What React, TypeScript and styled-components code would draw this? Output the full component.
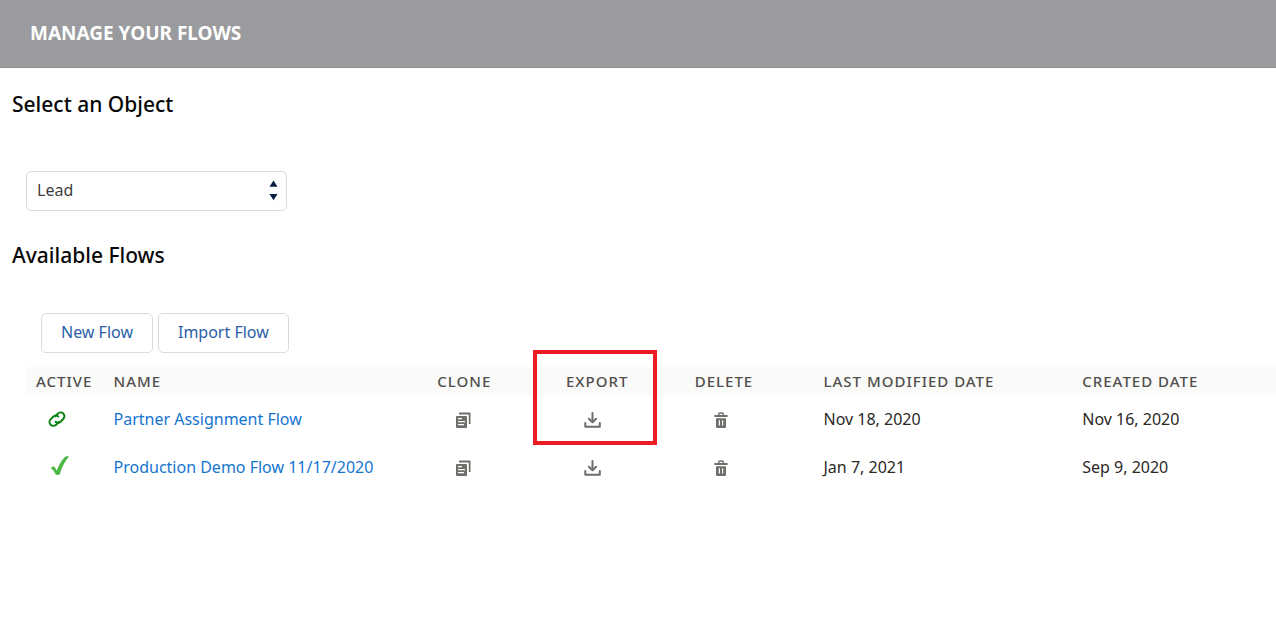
import React from "react";
import styled, { createGlobalStyle } from "styled-components";

const GlobalStyle = createGlobalStyle`
  * { box-sizing: border-box; }
  body {
    margin: 0;
    background: #fff;
    color: #2b2826;
    font-family: "Noto Sans", "Open Sans", sans-serif;
    font-size: 16px;
    line-height: 24px;
    overflow-x: hidden;
  }
`;

const Banner = styled.header`
  padding: 18px 30px 19px;
  background: #9a9b9e;
  border-bottom: 1px solid #8f9092;
`;

const Title = styled.h1`
  margin: 0;
  color: #fff;
  font-size: 19px;
  font-weight: 700;
  line-height: 30px;
  text-transform: uppercase;
`;

const Section = styled.section`
  padding-top: 20px;
`;

const Heading = styled.h2`
  margin: 0;
  padding-left: 12px;
  color: #080707;
  font-size: 21px;
  font-weight: 500;
  line-height: 32px;
`;

const SelectWrap = styled.div`
  position: relative;
  width: 261px;
  margin: 51px 0 8px 26px;
`;

const ObjectSelect = styled.select`
  display: block;
  width: 100%;
  height: 40px;
  padding: 0 32px 2px 10px;
  appearance: none;
  border: 1px solid #dddbda;
  border-radius: 5px;
  background: #fff;
  color: #3e3e3c;
  font: inherit;
`;

const SelectArrows = styled.svg`
  position: absolute;
  top: 9px;
  right: 9px;
  pointer-events: none;
`;

const Toolbar = styled.div`
  display: flex;
  gap: 5px;
  margin: 42px 0 14px 41px;
`;

const ToolButton = styled.button`
  height: 40px;
  padding: 0 19px 2px;
  border: 1px solid #dddbda;
  border-radius: 5px;
  background: #fff;
  color: #2a5ea6;
  font: inherit;
  cursor: pointer;
`;

const TableArea = styled.div`
  padding-left: 26px;
`;

const FlowTable = styled.table`
  width: 100%;
  table-layout: fixed;
  border-collapse: collapse;
`;

const Column = styled.col<{ $share: number }>`
  width: ${(p) => p.$share}%;
`;

const HeadCell = styled.th`
  position: relative;
  height: 28px;
  padding: 0 0 0 10px;
  background: #fafaf9;
  color: #514f4d;
  font-size: 15px;
  font-weight: 500;
  line-height: 28px;
  letter-spacing: 1px;
  text-align: left;
  text-transform: uppercase;
  white-space: nowrap;
`;

const Highlight = styled.span`
  position: absolute;
  z-index: 1;
  top: -17px;
  left: -23px;
  width: 124px;
  height: 95px;
  border: 4px solid #ec1c24;
  pointer-events: none;
`;

const Cell = styled.td`
  height: 48px;
  padding: 0 0 0 10px;
  white-space: nowrap;
`;

const FlowLink = styled.a`
  color: #1575cf;
  text-decoration: none;
`;

const IconCell = styled(Cell)`
  padding: 2px 0 0 27px;
`;

const StatusCell = styled(Cell)`
  padding-left: 20px;
`;

const IconButton = styled.button`
  display: block;
  padding: 0;
  border: 0;
  background: none;
  color: #706e6b;
  cursor: pointer;
`;

const Icon = styled.svg`
  display: block;
`;

const LinkIcon = () => (
  <Icon width="22" height="22" viewBox="0 0 22 22" fill="none" stroke="#0b7f10" strokeWidth="2" strokeLinecap="round" role="img" aria-label="Linked">
    <path d="M9.2 8.2l2.6-2.6a3.8 3.8 0 0 1 5.6 5.2l-2.6 2.7a3.8 3.8 0 0 1-5.2.2" />
    <path d="M12.6 14.2l-2.5 2.5a3.8 3.8 0 0 1-5.500-5.300l2.600-2.600a3.800 3.800 0 0 1 5.100-.2" />
  </Icon>
);

const CheckIcon = () => (
  <Icon width="26" height="26" viewBox="0 0 26 26" fill="#4db848" role="img" aria-label="Active">
    <path d="M5.200 13.700C6.800 12.200 8.300 12.200 9.200 13.900l1.500 2.700C12.800 11 15.600 6.300 18.600 3.200c.6-.6 1.300-.9 2.300-.9h1.300c.6 0 .8.4.3.9C18.600 7.500 15.900 13.200 14 19.400c-.5 1.900-3.900 2.100-4.700.4C8 16.900 7 15.400 5.300 14.700c-.5-.2-.5-.6-.1-1z" />
  </Icon>
);

const CloneIcon = () => (
  <Icon width="18" height="18" viewBox="0 0 18 18" aria-hidden="true">
    <path d="M5 1.500h10.500a1 1 0 0 1 1 1V13h-1.700V3.400H5z" fill="currentColor" />
    <rect x="2" y="5" width="11" height="12" rx="1" fill="currentColor" />
    <path d="M4 7.700h4M4 10.700h7M4 13.700h6" stroke="#fff" strokeWidth="1.300" />
  </Icon>
);

const ExportIcon = () => (
  <Icon width="18" height="18" viewBox="0 0 18 18" fill="none" stroke="currentColor" strokeWidth="2" strokeLinecap="round" strokeLinejoin="round" aria-hidden="true">
    <path d="M9.500 2v9M5.900 7.800l3.600 3.600L13.100 7.800M2.300 12v3.700h14.500V12" />
  </Icon>
);

const TrashIcon = () => (
  <Icon width="18" height="18" viewBox="0 0 18 18" aria-hidden="true">
    <path d="M6.800 4V3a1 1 0 0 1 1-1h2.400a1 1 0 0 1 1 1v1" fill="none" stroke="currentColor" strokeWidth="1.500" />
    <rect x="2.200" y="4" width="13.600" height="2" rx="0.700" fill="currentColor" />
    <path d="M4 7.300h10v8.700a1 1 0 0 1-1 1H5a1 1 0 0 1-1-1z" fill="currentColor" />
    <path d="M7.400 9.300v5.200M10.600 9.300v5.200" stroke="#fff" strokeWidth="1.200" />
  </Icon>
);

const flows = [
  { name: "Partner Assignment Flow", status: <LinkIcon />, modified: "Nov 18, 2020", created: "Nov 16, 2020" },
  { name: "Production Demo Flow 11/17/2020", status: <CheckIcon />, modified: "Jan 7, 2021", created: "Sep 9, 2020" },
];

const columnShares = [6.2, 25.9, 10.3, 10.3, 10.3, 20.7, 16.3];

export default function App() {
  return (
    <>
      <GlobalStyle />
      <Banner>
        <Title>Manage Your Flows</Title>
      </Banner>
      <main>
        <Section>
          <Heading>
            <label htmlFor="object">Select an Object</label>
          </Heading>
          <SelectWrap>
            <ObjectSelect id="object" defaultValue="Lead">
              <option>Lead</option>
            </ObjectSelect>
            <SelectArrows width="9" height="21" viewBox="0 0 9 21" fill="#061c3f" aria-hidden="true">
              <path d="M4.500 0.500L8.500 6.700H0.500zM4.500 20.200L0.500 14H8.500z" />
            </SelectArrows>
          </SelectWrap>
        </Section>
        <Section>
          <Heading>Available Flows</Heading>
          <Toolbar>
            <ToolButton type="button">New Flow</ToolButton>
            <ToolButton type="button">Import Flow</ToolButton>
          </Toolbar>
          <TableArea>
            <FlowTable>
              <colgroup>
                {columnShares.map((share, i) => (
                  <Column key={i} $share={share} />
                ))}
              </colgroup>
              <thead>
                <tr>
                  <HeadCell>Active</HeadCell>
                  <HeadCell>Name</HeadCell>
                  <HeadCell>Clone</HeadCell>
                  <HeadCell>
                    Export
                    <Highlight />
                  </HeadCell>
                  <HeadCell>Delete</HeadCell>
                  <HeadCell>Last Modified Date</HeadCell>
                  <HeadCell>Created Date</HeadCell>
                </tr>
              </thead>
              <tbody>
                {flows.map((flow) => (
                  <tr key={flow.name}>
                    <StatusCell>{flow.status}</StatusCell>
                    <Cell>
                      <FlowLink href="#">{flow.name}</FlowLink>
                    </Cell>
                    <IconCell>
                      <IconButton type="button" aria-label={`Clone ${flow.name}`}>
                        <CloneIcon />
                      </IconButton>
                    </IconCell>
                    <IconCell>
                      <IconButton type="button" aria-label={`Export ${flow.name}`}>
                        <ExportIcon />
                      </IconButton>
                    </IconCell>
                    <IconCell>
                      <IconButton type="button" aria-label={`Delete ${flow.name}`}>
                        <TrashIcon />
                      </IconButton>
                    </IconCell>
                    <Cell>{flow.modified}</Cell>
                    <Cell>{flow.created}</Cell>
                  </tr>
                ))}
              </tbody>
            </FlowTable>
          </TableArea>
        </Section>
      </main>
    </>
  );
}
